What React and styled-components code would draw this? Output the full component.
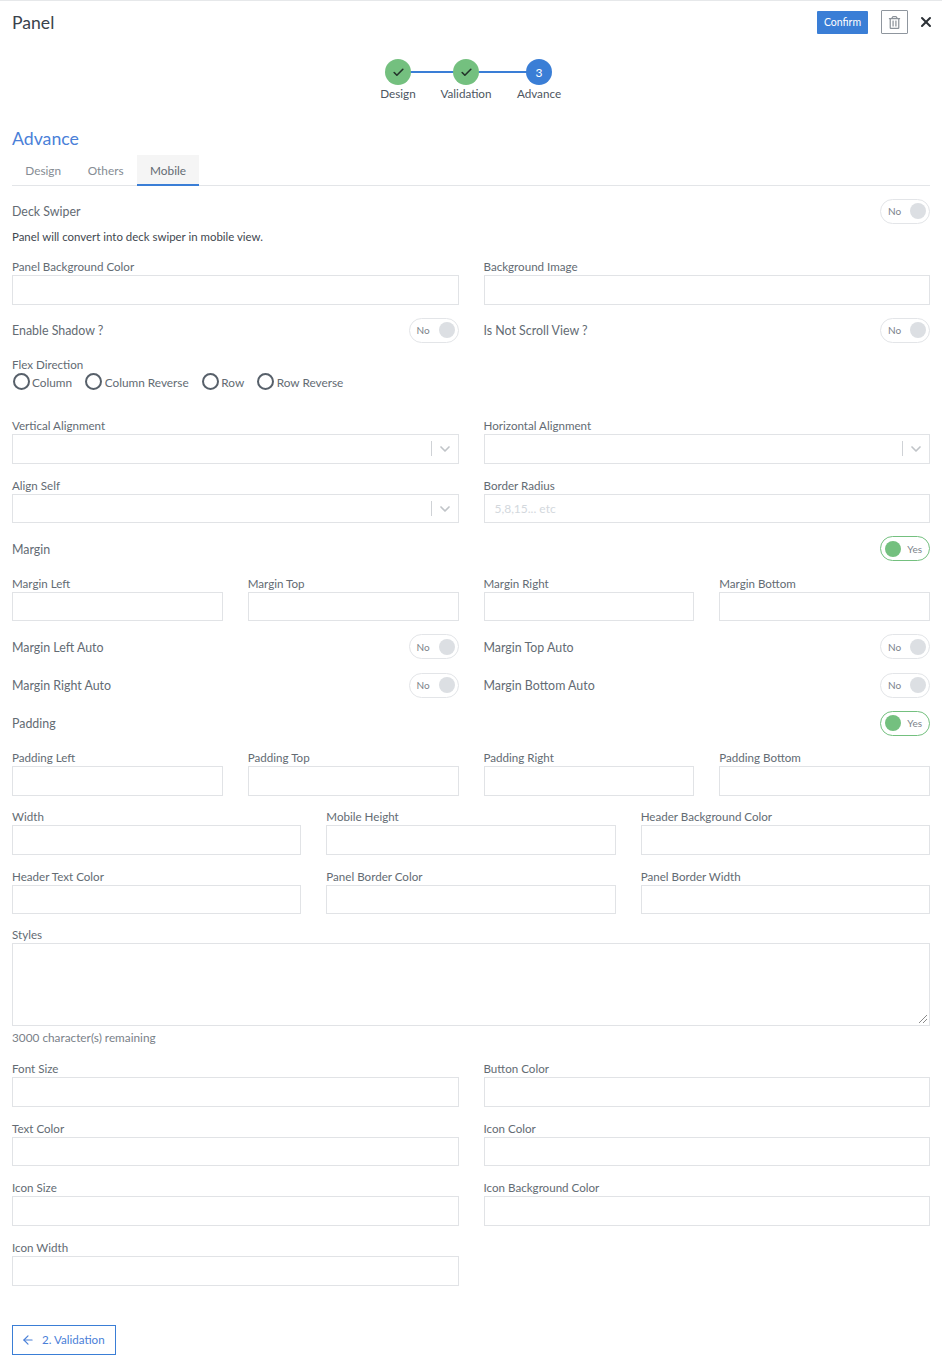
import React from 'react';
import styled, { createGlobalStyle } from 'styled-components';
import { ArrowLeft, Check, ChevronDown, X } from 'lucide-react';
import { FaRegTrashAlt } from 'react-icons/fa';

const Global = createGlobalStyle`
  html, body { margin: 0; padding: 0; background: #fff; }
  body { font-family: Lato, "Open Sans", sans-serif; color: #5c6670; -webkit-font-smoothing: antialiased; }
  * { box-sizing: border-box; }
`;

const Page = styled.div`
  width: 942px;
  height: 1365px;
  overflow: hidden;
  border-top: 1px solid #e6e8ea;
  padding: 0 12px;
`;
const Header = styled.header`
  display: flex;
  align-items: center;
  height: 42px;
`;
const Title = styled.h1`
  margin: 0;
  flex: 1;
  font-size: 17.6px;
  font-weight: 400;
  color: #39424b;
`;
const ConfirmButton = styled.button`
  width: 51px;
  height: 23px;
  border: 0;
  padding: 0;
  background: #3a7ed6;
  color: #fff;
  font: 400 10.5px Lato, sans-serif;
  border-radius: 1px;
  margin-right: 13px;
`;
const TrashButton = styled.button`
  width: 27px;
  height: 24px;
  padding: 0;
  display: grid;
  place-items: center;
  background: #fff;
  color: #8b9299;
  border: 1px solid #8f969e;
  border-radius: 1px;
  margin-right: 9.5px;
`;
const CloseButton = styled.button`
  width: 16px;
  height: 22px;
  padding: 0;
  margin-right: -3.5px;
  background: none;
  border: 0;
  display: grid;
  place-items: center;
  color: #2c3136;
`;

const Stepper = styled.div`
  display: flex;
  justify-content: center;
  margin-top: 16px;
  height: 44px;
`;
const Step = styled.div`
  position: relative;
  width: ${(p) => p.$w}px;
  display: flex;
  flex-direction: column;
  align-items: center;
`;
const StepLine = styled.span`
  position: absolute;
  top: 12px;
  left: 50%;
  width: ${(p) => p.$w}px;
  height: 2px;
  background: #3a7ed6;
`;
const StepDot = styled.span`
  position: relative;
  z-index: 1;
  width: 26px;
  height: 26px;
  border-radius: 50%;
  display: grid;
  place-items: center;
  background: ${(p) => (p.$done ? '#74c07f' : '#3a7ed6')};
  color: ${(p) => (p.$done ? '#23342a' : '#fff')};
  font-size: 12px;
`;
const StepLabel = styled.span`
  font-size: 11.7px;
  line-height: 16px;
  color: #4d565f;
  white-space: nowrap;
`;

const SectionTitle = styled.h2`
  margin: 25px 0 0;
  font-size: 17.7px;
  line-height: 22px;
  font-weight: 400;
  color: #4a80d8;
`;
const Tabs = styled.div`
  display: flex;
  height: 31px;
  margin-top: 5px;
  border-bottom: 1px solid #e3e5e8;
`;
const Tab = styled.div`
  height: 31px;
  padding: ${(p) => (p.$active ? '2px 13.3px 0' : '0 13.3px')};
  display: flex;
  align-items: center;
  font-size: 11.8px;
  color: ${(p) => (p.$active ? '#636b73' : '#858c93')};
  background: ${(p) => (p.$active ? '#f5f5f5' : 'transparent')};
  border-bottom: ${(p) => (p.$active ? '2px solid #3a7ed6' : '0')};
`;

const Form = styled.div`
  display: flex;
  flex-direction: column;
  gap: 14.1px;
  padding-top: 13.5px;
`;
const Row = styled.div`
  display: grid;
  grid-template-columns: ${(p) => p.$cols};
  column-gap: 25px;
  margin-top: ${(p) => p.$mt || 0}px;
`;
const Field = styled.label`
  display: block;
  min-width: 0;
`;
const Label = styled.div`
  font-size: 11.6px;
  line-height: 16px;
  color: #636b73;
  white-space: nowrap;
`;
const Input = styled.div`
  height: 29.5px;
  border: 1px solid #e1e3e6;
  padding: 0 10px;
  display: flex;
  align-items: center;
  font-size: 12px;
  color: #d3d8dd;
`;
const SelectBox = styled(Input)`
  justify-content: flex-end;
  padding: 0 5px 0 0;
  color: #c0c4c8;
`;
const SelectBar = styled.span`
  width: 1px;
  height: 15px;
  background: #cfd2d6;
  margin-right: 5px;
`;
const StylesBlock = styled.div`
  margin-top: -1px;
`;
const TextArea = styled.div`
  position: relative;
  height: 83px;
  border: 1px solid #e1e3e6;
`;
const Grip = styled.svg`
  position: absolute;
  right: 1px;
  bottom: 1px;
`;
const ToggleLine = styled.div`
  display: flex;
  align-items: center;
  justify-content: space-between;
  height: 24px;
  font-size: 12.4px;
  color: #636b73;
`;
const Toggle = styled.span`
  width: 50px;
  height: 25px;
  margin-top: -1px;
  border-radius: 13px;
  border: 1px solid ${(p) => (p.$on ? '#74c07f' : '#e3e5e8')};
  display: flex;
  flex-direction: ${(p) => (p.$on ? 'row' : 'row-reverse')};
  align-items: center;
  justify-content: space-between;
  padding: ${(p) => (p.$on ? '0 7px 0 4px' : '0 3px 0 7px')};
  font-size: 10px;
  color: #7c838a;
`;
const Knob = styled.span`
  width: 16px;
  height: 16px;
  border-radius: 50%;
  background: ${(p) => (p.$on ? '#74c07f' : '#dcdfe3')};
`;
const Note = styled.div`
  font-size: 11.45px;
  line-height: 16px;
  color: #3f474f;
  margin-top: -8.6px;
`;
const FlexBlock = styled.div`
  margin-top: 0.4px;
`;
const RadioRow = styled.div`
  display: flex;
  align-items: center;
  height: 20px;
  margin-top: -1px;
  padding-left: 0.5px;
`;
const RadioItem = styled.span`
  display: inline-flex;
  align-items: center;
  margin-right: 13.1px;
  font-size: 11.8px;
  color: #636b73;
`;
const RadioDot = styled.span`
  width: 17px;
  height: 17px;
  border: 2px solid #57606a;
  border-radius: 50%;
  margin-right: 2.5px;
  margin-top: -2px;
`;
const Remaining = styled.div`
  font-size: 11.8px;
  line-height: 16px;
  color: #7a8189;
  margin: 4px 0 1px;
`;
const BackButton = styled.button`
  margin-top: 39px;
  width: 104px;
  height: 30px;
  padding: 0 0 0 8px;
  display: flex;
  align-items: center;
  gap: 7px;
  background: #fff;
  border: 1px solid #3a7ed6;
  color: #4a80d8;
  font: 400 11.6px Lato, sans-serif;
`;

const TWO = '1fr 1fr';
const THREE = '1fr 1fr 1fr';
const FOUR = '1fr 1fr 1fr 1fr';

const Text = ({ label }) => (
  <Field>
    <Label>{label}</Label>
    <Input />
  </Field>
);
const Select = ({ label }) => (
  <Field>
    <Label>{label}</Label>
    <SelectBox>
      <SelectBar />
      <ChevronDown size={16} strokeWidth={2.5} />
    </SelectBox>
  </Field>
);
const Switch = ({ label, on }) => (
  <ToggleLine>
    <span>{label}</span>
    <Toggle $on={on}>
      <Knob $on={on} />
      {on ? 'Yes' : 'No'}
    </Toggle>
  </ToggleLine>
);

export default function App() {
  return (
    <Page>
      <Global />
      <Header>
        <Title>Panel</Title>
        <ConfirmButton>Confirm</ConfirmButton>
        <TrashButton><FaRegTrashAlt size={13} /></TrashButton>
        <CloseButton><X size={16} strokeWidth={3} /></CloseButton>
      </Header>
      <Stepper>
        <Step $w={68}>
          <StepLine $w={68} />
          <StepDot $done><Check size={13} strokeWidth={3} /></StepDot>
          <StepLabel>Design</StepLabel>
        </Step>
        <Step $w={68}>
          <StepLine $w={73} />
          <StepDot $done><Check size={13} strokeWidth={3} /></StepDot>
          <StepLabel>Validation</StepLabel>
        </Step>
        <Step $w={78}>
          <StepDot>3</StepDot>
          <StepLabel>Advance</StepLabel>
        </Step>
      </Stepper>
      <SectionTitle>Advance</SectionTitle>
      <Tabs>
        <Tab>Design</Tab>
        <Tab>Others</Tab>
        <Tab $active>Mobile</Tab>
      </Tabs>
      <Form>
        <Switch label="Deck Swiper" />
        <Note>Panel will convert into deck swiper in mobile view.</Note>
        <Row $cols={TWO}>
          <Text label="Panel Background Color" />
          <Text label="Background Image" />
        </Row>
        <Row $cols={TWO}>
          <Switch label="Enable Shadow ?" />
          <Switch label="Is Not Scroll View ?" />
        </Row>
        <FlexBlock>
          <Label>Flex Direction</Label>
          <RadioRow>
            <RadioItem><RadioDot />Column</RadioItem>
            <RadioItem><RadioDot />Column Reverse</RadioItem>
            <RadioItem><RadioDot />Row</RadioItem>
            <RadioItem><RadioDot />Row Reverse</RadioItem>
          </RadioRow>
        </FlexBlock>
        <Row $cols={TWO} $mt={11.9}>
          <Select label="Vertical Alignment" />
          <Select label="Horizontal Alignment" />
        </Row>
        <Row $cols={TWO}>
          <Select label="Align Self" />
          <Field>
            <Label>Border Radius</Label>
            <Input>5,8,15... etc</Input>
          </Field>
        </Row>
        <Switch label="Margin" on />
        <Row $cols={FOUR} $mt={0.4}>
          <Text label="Margin Left" />
          <Text label="Margin Top" />
          <Text label="Margin Right" />
          <Text label="Margin Bottom" />
        </Row>
        <Row $cols={TWO}>
          <Switch label="Margin Left Auto" />
          <Switch label="Margin Top Auto" />
        </Row>
        <Row $cols={TWO}>
          <Switch label="Margin Right Auto" />
          <Switch label="Margin Bottom Auto" />
        </Row>
        <Switch label="Padding" on />
        <Row $cols={FOUR} $mt={0.4}>
          <Text label="Padding Left" />
          <Text label="Padding Top" />
          <Text label="Padding Right" />
          <Text label="Padding Bottom" />
        </Row>
        <Row $cols={THREE} $mt={-0.7}>
          <Text label="Width" />
          <Text label="Mobile Height" />
          <Text label="Header Background Color" />
        </Row>
        <Row $cols={THREE}>
          <Text label="Header Text Color" />
          <Text label="Panel Border Color" />
          <Text label="Panel Border Width" />
        </Row>
        <StylesBlock>
          <Label>Styles</Label>
          <TextArea>
            <Grip width="10" height="10" viewBox="0 0 10 10">
              <path d="M1 9 9 1M5 9 9 5" stroke="#8a8a8a" strokeWidth="1" fill="none" />
            </Grip>
          </TextArea>
          <Remaining>3000 character(s) remaining</Remaining>
        </StylesBlock>
        <Row $cols={TWO}>
          <Text label="Font Size" />
          <Text label="Button Color" />
        </Row>
        <Row $cols={TWO}>
          <Text label="Text Color" />
          <Text label="Icon Color" />
        </Row>
        <Row $cols={TWO}>
          <Text label="Icon Size" />
          <Text label="Icon Background Color" />
        </Row>
        <Row $cols={TWO}>
          <Text label="Icon Width" />
        </Row>
      </Form>
      <BackButton><ArrowLeft size={14} strokeWidth={2} />2. Validation</BackButton>
    </Page>
  );
}
